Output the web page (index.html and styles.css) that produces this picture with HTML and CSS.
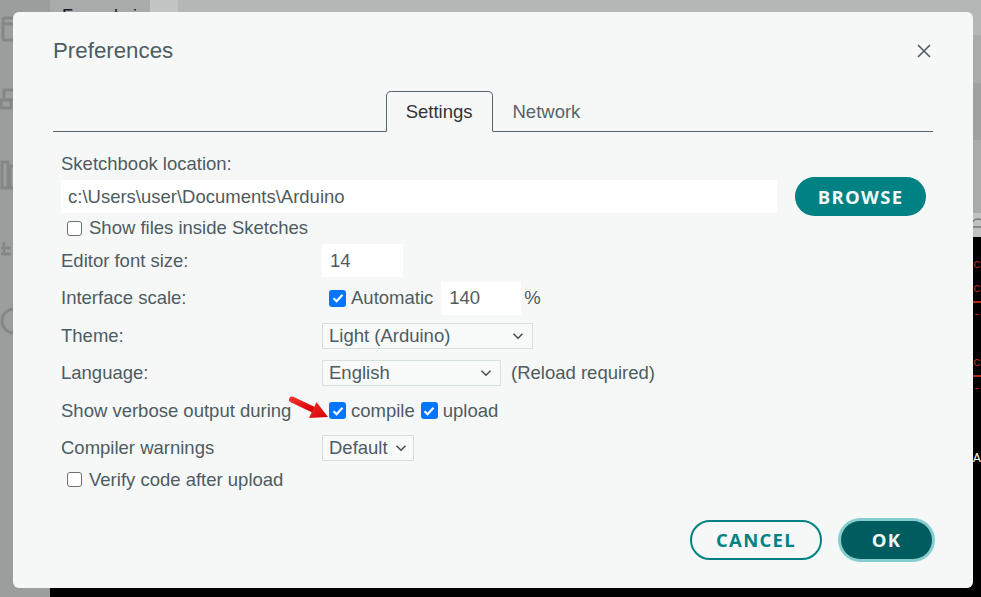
FILE: index.html
```html
<!DOCTYPE html>
<html lang="en">
<head>
<meta charset="utf-8">
<title>Preferences</title>
<link rel="stylesheet" href="styles.css">
</head>
<body>
<div class="app">
  <aside class="sidebar">
    <svg class="side-icon" width="26" height="30" viewBox="0 0 26 30"><rect x="3" y="4" width="18" height="22" rx="2" fill="none" stroke="#858787" stroke-width="3"/><line x1="3" y1="10" x2="21" y2="10" stroke="#858787" stroke-width="3"/></svg>
    <svg class="side-icon" width="26" height="30" viewBox="0 0 26 30"><rect x="4" y="4" width="12" height="10" fill="none" stroke="#858787" stroke-width="3"/><rect x="1" y="14" width="10" height="8" fill="none" stroke="#858787" stroke-width="3"/></svg>
    <svg class="side-icon" width="26" height="34" viewBox="0 0 26 34"><rect x="2" y="4" width="6" height="26" fill="none" stroke="#858787" stroke-width="3"/><rect x="10" y="8" width="6" height="22" fill="none" stroke="#858787" stroke-width="3"/></svg>
    <svg class="side-icon" width="26" height="30" viewBox="0 0 26 30"><path d="M4 8v12M1 14h10M1 20h10" fill="none" stroke="#858787" stroke-width="3"/></svg>
    <svg class="side-icon" width="26" height="30" viewBox="0 0 26 30"><circle cx="14" cy="15" r="12" fill="none" stroke="#858787" stroke-width="3"/></svg>
  </aside>
  <main class="main">
    <div class="topbar"><span class="filetab">Formula.ino</span><span class="filetab light"></span></div>
    <div class="bar bar-a"></div>
    <div class="bar bar-b"></div>
    <div class="bar bar-c"></div>
    <div class="bar bar-d"><svg class="mini-icon" width="10" height="16" viewBox="0 0 10 16"><path d="M1 14V7a6 5 0 0 1 12 0v7M1 10h10" fill="none" stroke="#777" stroke-width="1.4"/></svg></div>
    <div class="console">
      <p class="err">c</p>
      <p class="err under">c</p>
      <p class="dash">-</p>
      <p class="err under gap">c</p>
      <p class="dash">-</p>
      <p class="white gap2">A</p>
    </div>
  </main>
</div>

<div class="dialog">
  <div class="dlg-head">
    <h1 class="title">Preferences</h1>
    <span class="close"><svg width="16" height="16" viewBox="0 0 16 16"><path d="M2 2L14 14M14 2L2 14" stroke="#4e5b61" stroke-width="1.6" fill="none"/></svg></span>
  </div>
  <div class="tabs">
    <div class="tab active">Settings</div>
    <div class="tab">Network</div>
  </div>
  <div class="body">
    <div class="label-top">Sketchbook location:</div>
    <div class="path-row">
      <div class="field path">c:\Users\user\Documents\Arduino</div>
      <span class="btn browse">BROWSE</span>
    </div>
    <div class="check-row"><span class="cb"></span><span>Show files inside Sketches</span></div>
    <div class="row first"><span class="lbl">Editor font size:</span><div class="field num">14</div></div>
    <div class="row"><span class="lbl">Interface scale:</span><span class="cb on"><svg width="12" height="10" viewBox="0 0 12 10"><path d="M1.5 5.2L4.6 8.2L10.5 1.8" stroke="#fff" stroke-width="2.2" fill="none"/></svg></span><span class="after-cb">Automatic</span><div class="field num scale">140</div><span class="pct">%</span></div>
    <div class="row"><span class="lbl">Theme:</span><div class="select theme"><span>Light (Arduino)</span><svg class="chev" width="12" height="8" viewBox="0 0 12 8"><path d="M1.5 1.8L6 6.2L10.5 1.8" stroke="#434f54" stroke-width="1.6" fill="none"/></svg></div></div>
    <div class="row"><span class="lbl">Language:</span><div class="select lang"><span>English</span><svg class="chev" width="12" height="8" viewBox="0 0 12 8"><path d="M1.5 1.8L6 6.2L10.5 1.8" stroke="#434f54" stroke-width="1.6" fill="none"/></svg></div><span class="note">(Reload required)</span></div>
    <div class="row"><span class="lbl">Show verbose output during</span><span class="cb on"><svg width="12" height="10" viewBox="0 0 12 10"><path d="M1.5 5.2L4.6 8.2L10.5 1.8" stroke="#fff" stroke-width="2.2" fill="none"/></svg></span><span class="after-cb">compile</span><span class="cb on second"><svg width="12" height="10" viewBox="0 0 12 10"><path d="M1.5 5.2L4.6 8.2L10.5 1.8" stroke="#fff" stroke-width="2.2" fill="none"/></svg></span><span class="after-cb">upload</span></div>
    <div class="row"><span class="lbl">Compiler warnings</span><div class="select warn"><span>Default</span><svg class="chev" width="12" height="8" viewBox="0 0 12 8"><path d="M1.5 1.8L6 6.2L10.5 1.8" stroke="#434f54" stroke-width="1.6" fill="none"/></svg></div></div>
    <div class="check-row verify"><span class="cb"></span><span>Verify code after upload</span></div>
  </div>
  <div class="footer">
    <span class="btn cancel">CANCEL</span>
    <span class="btn ok">OK</span>
  </div>
</div>

<svg class="arrow" width="50" height="30" viewBox="0 0 50 30">
  <defs><linearGradient id="ag" x1="0" y1="0" x2="1" y2="1"><stop offset="0" stop-color="#f03030"/><stop offset="1" stop-color="#d40000"/></linearGradient></defs>
  <line x1="3" y1="3.5" x2="24" y2="13.5" stroke="url(#ag)" stroke-width="6" stroke-linecap="round"/>
  <polygon points="39,21 20,22 27.5,6" fill="url(#ag)"/>
</svg>
</body>
</html>
```

FILE: styles.css
```css
html, body {
  margin: 0;
  padding: 0;
}
body {
  width: 981px;
  height: 597px;
  overflow: hidden;
  background: #a2a4a4;
  font-family: "Liberation Sans", Arial, sans-serif;
}
.app {
  display: grid;
  grid-template-columns: 50px 1fr;
  height: 597px;
}
.sidebar {
  background: #9c9e9e;
  display: flex;
  flex-direction: column;
  gap: 42px;
  padding-top: 14px;
}
.side-icon {
  display: block;
}
.main {
  display: flex;
  flex-direction: column;
  min-width: 0;
}
.topbar {
  height: 35px;
  background: #b5b7b7;
  display: flex;
}
.filetab {
  width: 100px;
  background: #a9abab;
  color: #1a1a1a;
  font-size: 18px;
  padding: 6px 0 0 12px;
  box-sizing: border-box;
}
.filetab.light {
  width: 28px;
  padding: 0;
  background: #c3c5c5;
}
.bar { flex: none; }
.bar-a { height: 48px; background: #a9abab; }
.bar-b { height: 57px; background: #9fa1a1; }
.bar-c { height: 73px; background: #a9abab; }
.bar-d {
  height: 24px;
  background: #c0c2c2;
  display: flex;
  justify-content: flex-end;
  align-items: center;
}
.mini-icon {
  display: block;
  margin-right: 0;
}
.console {
  flex: 1;
  background: #000;
  padding: 16px 0 0 923px;
  font-family: "Liberation Mono", monospace;
  font-size: 13px;
  line-height: 24px;
}
.console p { margin: 0; width: 8px; }
.err { color: #b8261a; }
.under { border-bottom: 2px solid #b8261a; }
.dash { color: #b8261a; }
.gap { margin-top: 24px !important; }
.gap2 { margin-top: 46px !important; color: #e8e8e8; }

/* dialog */
.dialog {
  position: absolute;
  left: 13px;
  top: 12px;
  width: 960px;
  height: 576px;
  box-sizing: border-box;
  padding: 0 40px;
  background: #f6f8f8;
  border-radius: 6px;
  display: flex;
  flex-direction: column;
  color: #4e5b61;
  font-family: "Liberation Sans", Arial, sans-serif;
  font-size: 18.5px;
  line-height: 22px;
}
.dlg-head {
  height: 79px;
  display: flex;
  justify-content: space-between;
  align-items: flex-start;
  flex: none;
}
.title {
  margin: 26px 0 0;
  font-size: 22.3px;
  font-weight: normal;
  line-height: 26px;
  color: #4e5b61;
}
.close {
  margin: 31px 1px 0 0;
  width: 16px;
  height: 16px;
  display: block;
}
.close svg { display: block; }
.tabs {
  display: flex;
  justify-content: center;
  border-bottom: 1px solid #59666c;
  height: 40px;
  flex: none;
}
.tab {
  box-sizing: border-box;
  height: 41px;
  padding: 0 19px;
  border: 1px solid transparent;
  border-radius: 5px 5px 0 0;
  line-height: 40px;
  color: #56636a;
}
.tab.active {
  border-color: #59666c;
  border-bottom-color: #f6f8f8;
  color: #333;
}
.body {
  padding: 21px 7px 0 8px;
}
.label-top {
  height: 22px;
}
.path-row {
  display: flex;
  align-items: center;
  gap: 18px;
  height: 39px;
  margin-top: 2px;
}
.field {
  background: #fff;
  height: 33px;
  box-sizing: border-box;
  padding: 0 7px;
  display: flex;
  align-items: center;
  color: #4e5b61;
}
.field.path { flex: 1; }
.field.num { width: 81px; padding-left: 8px; }
.field.scale { width: 80px; margin-left: 8px; }
.pct { margin-left: 3px; }
.btn {
  display: flex;
  align-items: center;
  justify-content: center;
  box-sizing: border-box;
  font-family: "Open Sans", "Liberation Sans", sans-serif;
  font-weight: 700;
  font-size: 18.5px;
  letter-spacing: 1.3px;
  border-radius: 22px;
}
.browse {
  width: 131px;
  height: 39px;
  background: #008184;
  color: #f2f8f8;
  flex: none;
}
.check-row {
  height: 24px;
  display: flex;
  align-items: center;
}
.check-row .cb {
  margin: 0 7px 0 6px;
}
.cb {
  box-sizing: border-box;
  width: 15px;
  height: 15px;
  border: 1px solid #6f6f6f;
  border-radius: 3px;
  background: #fff;
  flex: none;
  display: flex;
  align-items: center;
  justify-content: center;
}
.cb.on {
  width: 17px;
  height: 17px;
  border: none;
  border-radius: 3px;
  background: #0075ff;
  margin-left: 7px;
}
.cb.on.second { margin-left: 6px; }
.cb svg { display: block; }
.after-cb { margin-left: 5px; }
.row {
  height: 33px;
  margin-top: 4.6px;
  display: flex;
  align-items: center;
}
.row.first { margin-top: 4px; }
.lbl {
  width: 261px;
  flex: none;
}
.select {
  box-sizing: border-box;
  height: 26px;
  border: 1px solid #d6e0e0;
  background: #f8fafa;
  padding: 0 8px 0 6px;
  display: flex;
  align-items: center;
  justify-content: space-between;
  color: #4e5b61;
}
.chev { display: block; flex: none; }
.select.theme { width: 211px; }
.select.lang { width: 179px; }
.select.warn { width: 92px; padding-right: 6px; }
.note { margin-left: 10px; }
.check-row.verify { margin-top: 3px; }
.footer {
  margin-top: auto;
  display: flex;
  justify-content: flex-end;
  align-items: center;
  gap: 19px;
  padding: 0 1px 28px 0;
  flex: none;
}
.cancel {
  width: 132px;
  height: 40px;
  border: 2px solid #008184;
  color: #008184;
  background: #f6f8f8;
}
.ok {
  width: 91px;
  height: 38px;
  background: #005c5f;
  color: #f2f8f8;
  box-shadow: 0 0 0 3px #86cdd0;
}
.arrow {
  position: absolute;
  left: 289px;
  top: 396px;
}
```
